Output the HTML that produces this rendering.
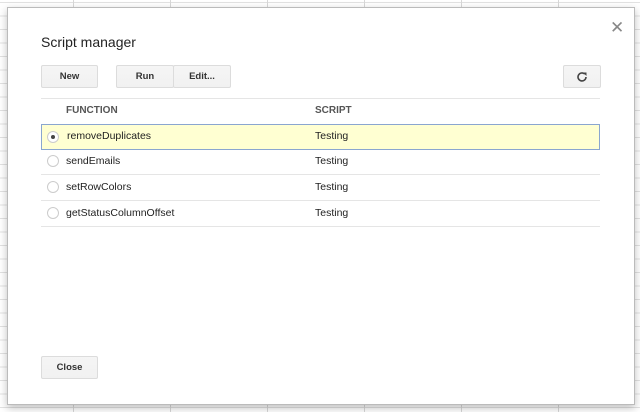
<html><head><style>
body{margin:0;width:640px;height:412px;overflow:hidden;position:relative;font-family:"Liberation Sans",Arial,sans-serif;
background-color:#fff;
background-image:linear-gradient(90deg,#d8d8d8 1px,transparent 1px),linear-gradient(#e2e2e2 1px,transparent 1px);
background-size:97px 100%,100% 13.5px;background-position:73px 0,0 2px;}
.dlg{position:absolute;left:7px;top:7px;width:626px;height:396px;background:#fff;border:1px solid #bbb;box-shadow:0 3px 8px rgba(0,0,0,.25);}
.t{position:absolute;left:33px;top:26px;font-size:14px;color:#222;}
.x{position:absolute;left:602px;top:10px;font-size:17px;color:#888;}
.b{position:absolute;height:21px;border:1px solid #dcdcdc;background:linear-gradient(#f5f5f5,#f1f1f1);border-radius:2px;font-size:9.5px;font-weight:bold;color:#333;text-align:center;line-height:21px;box-sizing:content-box}
.hl{position:absolute;left:33px;width:559px;height:1px;background:#e5e5e5}
.h{position:absolute;top:97px;font-size:10px;font-weight:bold;color:#555;}
.r{position:absolute;left:33px;width:559px;height:25px;font-size:10.5px;color:#222;}
.r span{position:absolute;top:6px}
.rad{position:absolute;left:6px;top:6px;width:10px;height:10px;border:1px solid #ccc;border-radius:50%;background:#fff}
</style></head><body>
<div class="dlg">
<div class="t">Script manager</div>
<div class="x">✕</div>
<div class="b" style="left:33px;top:57px;width:55px">New</div>
<div class="b" style="left:108px;top:57px;width:56px">Run</div>
<div class="b" style="left:165px;top:57px;width:56px">Edit...</div>
<div class="b" style="left:555px;top:57px;width:36px;font-size:15px;font-weight:normal">
<svg width="14" height="14" viewBox="0 0 14 14" style="margin-top:4px"><path d="M11 7a4 4 0 1 1-1.2-2.9" fill="none" stroke="#444" stroke-width="1.6"/><path d="M8 2.5h3.5V6z" fill="#444"/></svg></div>
<div class="hl" style="top:90px"></div>
<div class="h" style="left:58px">FUNCTION</div>
<div class="h" style="left:307px">SCRIPT</div>
<div class="r" style="top:116px;background:#ffffd2;border:1px solid #8aa6d0;box-sizing:border-box;height:26px"><div class="rad" style="top:6px;left:5px"><div style="width:4px;height:4px;margin:3px;border-radius:50%;background:#444"></div></div><span style="left:25px;top:5px">removeDuplicates</span><span style="left:273px;top:5px">Testing</span></div>
<div class="r" style="top:141px"><div class="rad"></div><span style="left:25px">sendEmails</span><span style="left:274px">Testing</span></div>
<div class="hl" style="top:166px"></div>
<div class="r" style="top:167px"><div class="rad"></div><span style="left:25px">setRowColors</span><span style="left:274px">Testing</span></div>
<div class="hl" style="top:192px"></div>
<div class="r" style="top:193px"><div class="rad"></div><span style="left:25px">getStatusColumnOffset</span><span style="left:274px">Testing</span></div>
<div class="hl" style="top:218px"></div>
<div class="b" style="left:33px;top:348px;width:55px">Close</div>
</div>
</body></html>
